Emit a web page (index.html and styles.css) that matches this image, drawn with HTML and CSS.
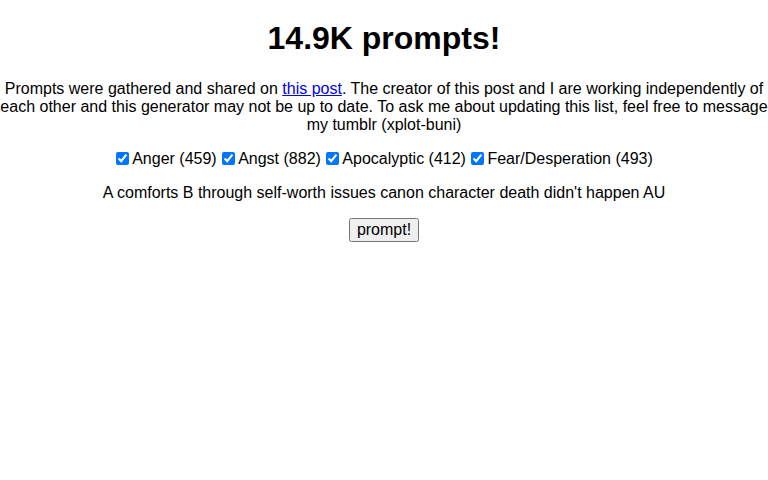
FILE: index.html
```html
<!DOCTYPE html>
<html lang="en">
<head>
  <meta charset="UTF-8" />
  <meta name="viewport" content="width=device-width, initial-scale=1.0">
  <title>prompt generator</title>
  <link rel="stylesheet" href="styles.css">
</head>
<body>

  <h1>14.9K prompts!</h1>

  <p class="intro">Prompts were gathered and shared on <a href="#">this post</a>. The creator of this post and I are working independently of each other and this generator may not be up to date. To ask me about updating this list, feel free to message my tumblr (xplot-buni)</p>

  <!-- categorias -->
  <div class="tags">
    <label><input type="checkbox" checked>Anger (459)</label>
    <label><input type="checkbox" checked>Angst (882)</label>
    <label><input type="checkbox" checked>Apocalyptic (412)</label>
    <label><input type="checkbox" checked>Fear/Desperation (493)</label>
  </div>

  <p id="resultado">A comforts B through self-worth issues canon character death didn't happen AU</p>

  <button class="prompt-button">prompt!</button>

</body>
</html>
```

FILE: styles.css
```css
body {
  margin: 0;
  font-family: "Liberation Sans", Arial, sans-serif;
  font-size: 16px;
  text-align: center;
  color: #000;
}

h1 {
  font-size: 32px;
  margin: 20px 0 23px;
}

.intro {
  margin: 0 0 16px;
}

.intro a {
  color: #0000ee;
}

.tags {
  margin: 16px 0;
}

.tags input {
  margin: 0 3px 0 1px;
  width: 13px;
  height: 13px;
  vertical-align: -1px;
}

#resultado {
  margin: 0 0 16px;
}

.prompt-button {
  font-family: "Liberation Sans", Arial, sans-serif;
  font-size: 16px;
}
```
